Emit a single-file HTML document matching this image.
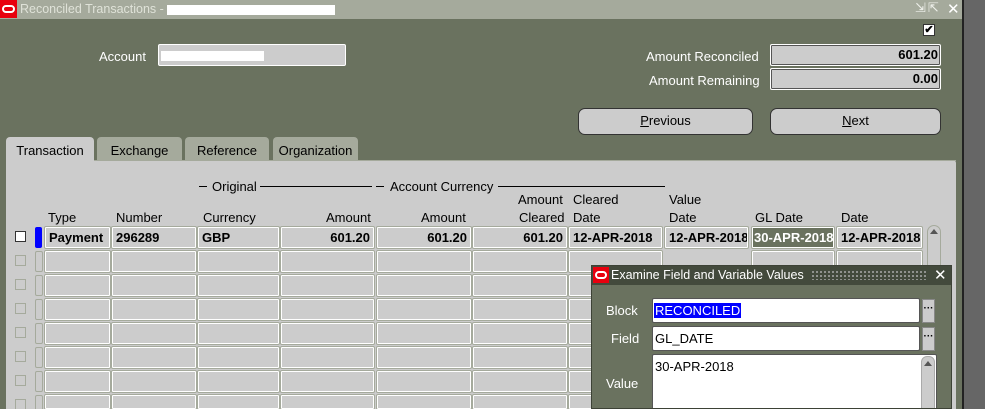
<!DOCTYPE html>
<html><head><meta charset="utf-8"><style>
*{box-sizing:border-box;margin:0;padding:0}
html{width:985px;height:409px;overflow:hidden}
body{width:985px;height:409px;overflow:hidden;background:#6a725f;font-family:"Liberation Sans",Arial,sans-serif;font-size:13px;position:relative}
.a{position:absolute}
.lbl{position:absolute;color:#fff;font-size:13px;white-space:nowrap}
.fld{position:absolute;background:#ccc;border:1px solid #fff;border-radius:2px;box-shadow:0 0 0 1px #555 inset}
.cell{position:absolute;height:21px;background:#ccc;border:1px solid #fff;box-shadow:0 0 0 1px #a5aa9c;border-radius:1px;font-size:13px;line-height:19px;padding:0 3px;white-space:nowrap;color:#000;overflow:hidden}
.b{font-weight:bold}
.r{text-align:right}
.hd{position:absolute;color:#000;font-size:13px;white-space:nowrap}
.chk{position:absolute;width:11px;height:11px;border:1px solid #a5aa9c;background:#ccc}
.tab{position:absolute;top:137px;height:24px;background:#a5aa9c;border-radius:4px 4px 0 0;text-align:center;line-height:26px;font-size:13px;color:#000}
.btn{position:absolute;background:#ccc;border:1px solid #333;border-radius:7px;text-align:center;line-height:24px;font-size:13px}
</style></head><body>
<div class="a" style="left:0;top:0;width:962px;height:19px;background:#a5aa9c"></div>
<div class="a" style="left:0;top:0;width:17px;height:18px;background:#e8000e"></div>
<div class="a" style="left:2px;top:5px;width:13px;height:8px;border:2px solid #fff;border-radius:5px"></div>
<div class="lbl" style="left:20px;top:2px;color:#dfe2d8;font-size:12.5px">Reconciled Transactions - </div>
<div class="a" style="left:167px;top:5px;width:168px;height:10px;background:#fff"></div>
<div class="lbl" style="left:915px;top:0px;color:#eef0ea;font-size:13px;letter-spacing:2px">⇲⇱</div>
<div class="lbl" style="left:947px;top:0px;color:#fff;font-size:15px">✕</div>
<div class="a" style="left:962px;top:0;width:2px;height:409px;background:#222"></div>
<div class="a" style="left:964px;top:0;width:21px;height:409px;background:#666"></div>
<div class="a" style="left:923px;top:24px;width:12px;height:12px;background:#fff;border:1px solid #333;font-size:11px;line-height:10px;text-align:center;font-weight:bold">✔</div>
<div class="lbl" style="left:99px;top:49px">Account</div>
<div class="fld" style="left:158px;top:44px;width:188px;height:22px;box-shadow:none"></div>
<div class="a" style="left:161px;top:51px;width:103px;height:10px;background:#fff"></div>
<div class="lbl" style="left:646px;top:49px">Amount Reconciled</div>
<div class="fld b r" style="left:770px;top:44px;width:171px;height:22px;line-height:20px;padding-right:2px">601.20</div>
<div class="lbl" style="left:649px;top:73px">Amount Remaining</div>
<div class="fld b r" style="left:770px;top:68px;width:171px;height:22px;line-height:20px;padding-right:2px">0.00</div>
<div class="btn" style="left:578px;top:108px;width:175px;height:27px"><u>P</u>revious</div>
<div class="btn" style="left:770px;top:108px;width:171px;height:27px"><u>N</u>ext</div>
<div class="tab" style="left:6px;width:88px;background:#ccc;height:25px;top:137px;line-height:27px">Transaction</div>
<div class="tab" style="left:97px;width:85px;line-height:27px">Exchange</div>
<div class="tab" style="left:185px;width:84px;line-height:27px">Reference</div>
<div class="tab" style="left:273px;width:85px;line-height:27px">Organization</div>
<div class="a" style="left:6px;top:160px;width:950px;height:249px;background:#ccc;border-radius:0 3px 0 0"></div>
<div class="a" style="left:94px;top:160px;width:862px;height:1px;background:#a5aa9c"></div>
<div class="a" style="left:199px;top:186px;width:8px;height:1px;background:#000"></div>
<div class="hd" style="left:212px;top:179px">Original</div>
<div class="a" style="left:260px;top:186px;width:112px;height:1px;background:#000"></div>
<div class="a" style="left:376px;top:186px;width:8px;height:1px;background:#000"></div>
<div class="hd" style="left:390px;top:179px">Account Currency</div>
<div class="a" style="left:498px;top:186px;width:167px;height:1px;background:#000"></div>
<div class="hd" style="left:48px;top:210px">Type</div>
<div class="hd" style="left:116px;top:210px">Number</div>
<div class="hd" style="left:203px;top:210px">Currency</div>
<div class="hd" style="left:326px;top:210px">Amount</div>
<div class="hd" style="left:421px;top:210px">Amount</div>
<div class="hd" style="left:518px;top:192px">Amount</div>
<div class="hd" style="left:519px;top:210px">Cleared</div>
<div class="hd" style="left:573px;top:192px">Cleared</div>
<div class="hd" style="left:573px;top:210px">Date</div>
<div class="hd" style="left:669px;top:192px">Value</div>
<div class="hd" style="left:669px;top:210px">Date</div>
<div class="hd" style="left:755px;top:210px">GL Date</div>
<div class="hd" style="left:841px;top:210px">Date</div>
<div id="rows"></div>
<div class="a" style="left:927px;top:225px;width:14px;height:184px;border:1px solid #a5aa9c;border-radius:7px 7px 0 0;background:#ccc"></div>
<div class="a" style="left:930px;top:229px;width:0;height:0;border-left:4px solid transparent;border-right:4px solid transparent;border-bottom:5px solid #555"></div>
<div class="a" style="left:591px;top:265px;width:361px;height:144px;background:#6a725f;border:1px solid #3d4236;overflow:hidden">
 <div class="a" style="left:0;top:0;width:359px;height:19px;background:#434a3c"></div>
 <div class="a" style="left:1px;top:1px;width:16px;height:16px;background:#e8000e"></div>
 <div class="a" style="left:3px;top:5px;width:12px;height:8px;border:2px solid #fff;border-radius:5px"></div>
 <div class="lbl" style="left:19px;top:2px;font-size:12.5px">Examine Field and Variable Values</div>
 <div class="a" style="left:219px;top:4px;width:117px;height:10px;background-image:radial-gradient(#aaa 0.8px,transparent 1px);background-size:4px 4px"></div>
 <div class="lbl" style="left:342px;top:0px;font-size:15px">✕</div>
 <div class="lbl" style="left:14px;top:37px">Block</div>
 <div class="a" style="left:60px;top:32px;width:268px;height:25px;background:#fff;border:1px solid #555;border-radius:2px"></div>
 <div class="a" style="left:62px;top:37px;background:#0000ff;color:#fff;font-size:13px;line-height:15px;padding:0 1px">RECONCILED</div>
 <div class="a" style="left:330px;top:33px;width:13px;height:24px;background:#ccc;border:1px solid #888;font-size:10px;text-align:center;line-height:18px;font-weight:bold">···</div>
 <div class="lbl" style="left:19px;top:65px">Field</div>
 <div class="a" style="left:60px;top:60px;width:268px;height:25px;background:#fff;border:1px solid #555;border-radius:2px;padding:4px 2px;line-height:15px">GL_DATE</div>
 <div class="a" style="left:330px;top:61px;width:13px;height:24px;background:#ccc;border:1px solid #888;font-size:10px;text-align:center;line-height:18px;font-weight:bold">···</div>
 <div class="lbl" style="left:14px;top:110px">Value</div>
 <div class="a" style="left:60px;top:88px;width:285px;height:60px;background:#fff;border:1px solid #555;border-radius:2px;padding:4px 2px;line-height:15px">30-APR-2018</div>
 <div class="a" style="left:329px;top:90px;width:14px;height:54px;background:#ccc;border:1px solid #aaa;border-radius:6px 6px 0 0"></div>
 <div class="a" style="left:332px;top:95px;width:0;height:0;border-left:4px solid transparent;border-right:4px solid transparent;border-bottom:5px solid #555"></div>
</div>
<script>
var cols=[[45,65],[112,84],[198,81],[281,93],[377,94],[473,94],[569,93],[665,83],[752,82],[837,85]];
var h='';
var d1=['Payment','296289','GBP','601.20','601.20','601.20','12-APR-2018','12-APR-2018','30-APR-2018','12-APR-2018'];
var right=[0,0,0,1,1,1,0,0,0,0];
for(var r=0;r<8;r++){
 var y=227+r*24;
 if(r==0){h+='<div class="chk" style="left:15px;top:'+(y+4)+'px;background:#fff;border-color:#333"></div>';
  h+='<div class="a" style="left:35px;top:'+y+'px;width:7px;height:21px;background:#0000ff;border-radius:2px"></div>';}
 else{h+='<div class="chk" style="left:15px;top:'+(y+4)+'px"></div>';
  h+='<div class="a" style="left:35px;top:'+y+'px;width:8px;height:21px;border:1px solid #a5aa9c;border-radius:2px"></div>';}
 for(var c=0;c<cols.length;c++){
  if(r>=2&&cols[c][0]>580) continue;
  if(r==1&&cols[c][0]>580&&cols[c][0]<700) continue;
  var t=r==0?d1[c]:'';
  var hh=(y+21>409)?(409-y):21;
  var st='left:'+cols[c][0]+'px;top:'+y+'px;width:'+cols[c][1]+'px;height:'+hh+'px;';
  if(r==0&&c==8) st+='background:#6a725f;color:#fff;padding:0 1px;';
  h+='<div class="cell b'+(right[c]?' r':'')+'" style="'+st+'">'+t+'</div>';
 }
}
document.getElementById('rows').innerHTML=h;
</script>
</body></html>
